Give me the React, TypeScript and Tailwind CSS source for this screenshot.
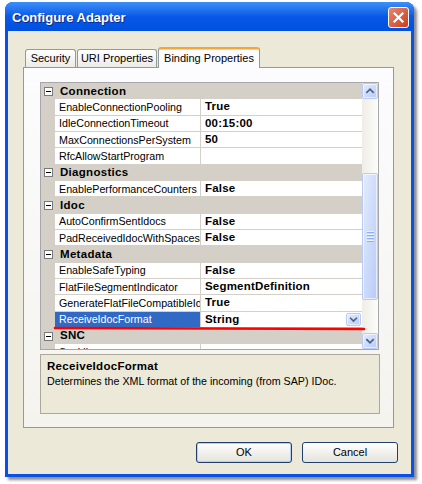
import React from "react";

type Row = { cat?: string; name?: string; value?: string; selected?: boolean };

const rows: Row[] = [
  { cat: "Connection" },
  { name: "EnableConnectionPooling", value: "True" },
  { name: "IdleConnectionTimeout", value: "00:15:00" },
  { name: "MaxConnectionsPerSystem", value: "50" },
  { name: "RfcAllowStartProgram", value: "" },
  { cat: "Diagnostics" },
  { name: "EnablePerformanceCounters", value: "False" },
  { cat: "Idoc" },
  { name: "AutoConfirmSentIdocs", value: "False" },
  { name: "PadReceivedIdocWithSpaces", value: "False" },
  { cat: "Metadata" },
  { name: "EnableSafeTyping", value: "False" },
  { name: "FlatFileSegmentIndicator", value: "SegmentDefinition" },
  { name: "GenerateFlatFileCompatibleIdoc", value: "True" },
  { name: "ReceiveIdocFormat", value: "String", selected: true },
  { cat: "SNC" },
  { name: "SncLibrary", value: "" },
];

/* ── Icons ── */
const Chevron = ({ up = false, size = 16 }: { up?: boolean; size?: number }) => (
  <svg width={size} height={size} viewBox="0 0 16 16" fill="none">
    <polyline
      points={up ? "4.5,9.5 8,6 11.5,9.5" : "4.5,6.5 8,10 11.5,6.5"}
      stroke="#4d6185"
      strokeWidth={2}
      strokeLinecap="square"
    />
  </svg>
);

const MinusBox = () => (
  <div className="flex h-[9px] w-[9px] items-center justify-center border border-[#7a7a7a] bg-white">
    <div className="h-[1px] w-[5px] bg-black" />
  </div>
);

const xpBlue =
  "rounded-[2px] border border-[#b7cbf5] bg-linear-to-br from-[#e4ecfe] to-[#b8cbf7] shadow-[inset_0_0_0_1px_rgba(255,255,255,0.6)]";

function CatRow({ label }: { label: string }) {
  return (
    <div className="flex h-[16.33px] shrink-0 items-center bg-[#d4d0c8]">
      <div className="flex w-[14px] shrink-0 justify-center">
        <MinusBox />
      </div>
      <span className="pl-[5px] text-[11.5px] font-bold tracking-[0.3px] text-black">{label}</span>
    </div>
  );
}

function PropRow({ r }: { r: Row }) {
  return (
    <div className="flex h-[16.33px] shrink-0">
      <div className="w-[14px] shrink-0 bg-[#d4d0c8]" />
      <div
        className={`flex w-[145px] shrink-0 items-center overflow-hidden whitespace-nowrap border-b border-[#d4d0c8] pl-[4px] text-[10.7px] ${
          r.selected ? "bg-[#316ac5] text-white" : "bg-white text-black"
        }`}
      >
        {r.name}
      </div>
      <div className="w-[1px] shrink-0 bg-[#d4d0c8]" />
      <div className="flex w-[161px] shrink-0 items-center justify-between border-b border-[#d4d0c8] bg-white pl-[4px] pr-[1px] text-[11.5px] font-bold tracking-[0.2px] text-black">
        <span>{r.value}</span>
        {r.selected && (
          <div className={`flex h-[13px] w-[15px] items-center justify-center ${xpBlue}`}>
            <Chevron size={13} />
          </div>
        )}
      </div>
    </div>
  );
}

function ScrollBar() {
  return (
    <div className="flex w-[16px] shrink-0 flex-col bg-linear-to-r from-[#eeede6] to-[#fdfdfa]">
      <div className={`flex h-[16px] items-center justify-center ${xpBlue}`}>
        <Chevron up />
      </div>
      <div className="h-[74px]" />
      <div className={`flex h-[127px] flex-col items-center justify-center gap-[1px] ${xpBlue}`}>
        {[0, 1, 2, 3].map((i) => (
          <div key={i} className="flex flex-col">
            <div className="h-[1px] w-[7px] bg-[#eef4fe]" />
            <div className="h-[1px] w-[7px] bg-[#8cb0f8]" />
          </div>
        ))}
      </div>
      <div className="h-[33px]" />
      <div className={`flex h-[16px] items-center justify-center ${xpBlue}`}>
        <Chevron />
      </div>
    </div>
  );
}

export default function App() {
  return (
    <div className="relative h-[484px] w-[422px] overflow-hidden bg-white pl-[5px] pt-[2px] font-['Liberation_Sans',Arial,sans-serif]">
      {/* window */}
      <div className="flex h-[475px] w-[409px] flex-col rounded-t-[8px] bg-[#0a4fe6] shadow-[3px_3px_3px_rgba(0,0,0,0.45)]">
        {/* title bar */}
        <div className="flex h-[29px] shrink-0 items-center justify-between rounded-t-[8px] bg-linear-to-b from-[#3d8ff8] via-[#0958e8] to-[#0050e0] pl-[7px] pr-[5px] pt-[2px]">
          <span className="text-[13px] font-bold text-white [text-shadow:1px_1px_0_#0b2a8a]">Configure Adapter</span>
          <div className="flex h-[21px] w-[21px] items-center justify-center rounded-[3px] border border-white bg-linear-to-br from-[#e8876a] to-[#c83c1d]">
            <svg width="13" height="13" viewBox="0 0 13 13">
              <path d="M2.5 2.5 L10.5 10.5 M10.5 2.5 L2.5 10.5" stroke="#fff" strokeWidth={2.2} strokeLinecap="square" />
            </svg>
          </div>
        </div>

        {/* client */}
        <div className="mx-[3px] mb-[3px] flex flex-1 flex-col bg-[#ece9d8] px-[15px] pt-[16px]">
          {/* tabs */}
          <div className="flex h-[20px] items-end pl-[2px] text-[11px] text-black">
            <div className="flex h-[18px] w-[51px] items-center justify-center rounded-t-[3px] border border-b-0 border-[#919b9c] bg-linear-to-b from-white to-[#ecebe6]">
              Security
            </div>
            <div className="ml-[1px] flex h-[18px] w-[80px] items-center justify-center rounded-t-[3px] border border-b-0 border-[#919b9c] bg-linear-to-b from-white to-[#ecebe6]">
              URI Properties
            </div>
            <div className="relative z-10 -mb-[1px] ml-[1px] flex h-[21px] w-[102px] items-center justify-center rounded-t-[3px] border-x border-t-2 border-x-[#919b9c] border-t-[#f0a83a] bg-[#fcfcfe] shadow-[inset_0_1px_0_#ffd27a]">
              Binding Properties
            </div>
          </div>

          {/* tab panel */}
          <div className="h-[361px] w-[371px] border border-[#919b9c] bg-linear-to-b from-[#fcfcfe] to-[#f4f3ee] pl-[16px] pt-[14px]">
            {/* property grid */}
            <div className="flex h-[268px] w-[339px] overflow-hidden border border-[#a7a6aa] bg-white">
              <div className="flex flex-1 flex-col overflow-hidden">
                {rows.map((r, i) =>
                  r.cat ? <CatRow key={i} label={r.cat} /> : <PropRow key={i} r={r} />
                )}
              </div>
              <ScrollBar />
            </div>

            {/* description */}
            <div className="mt-[4px] h-[60px] w-[340px] border border-[#aca899] bg-[#ece9d8] px-[6px] pt-[3px] text-black">
              <div className="text-[11.5px] font-bold leading-[16px] tracking-[0.3px]">ReceiveIdocFormat</div>
              <div className="text-[10.7px] leading-[14px]">Determines the XML format of the incoming (from SAP) IDoc.</div>
            </div>
          </div>

          {/* buttons */}
          <div className="mt-[14px] flex justify-end gap-[10px] pr-0 -mr-[2px] text-[11px] text-black">
            <button className="h-[21px] w-[96px] rounded-[3px] border border-[#1f3f6e] bg-linear-to-b from-white to-[#e4e3dc] shadow-[inset_0_0_0_1px_#b6cdf5]">
              OK
            </button>
            <button className="h-[21px] w-[96px] rounded-[3px] border border-[#1f3f6e] bg-linear-to-b from-white to-[#e4e3dc]">
              Cancel
            </button>
          </div>
        </div>
      </div>

      {/* red annotation line */}
      <svg className="pointer-events-none absolute left-0 top-0" width="422" height="484">
        <line x1="55" y1="328" x2="364" y2="329" stroke="#ff0000" strokeWidth={2.6} strokeLinecap="round" />
      </svg>
    </div>
  );
}
